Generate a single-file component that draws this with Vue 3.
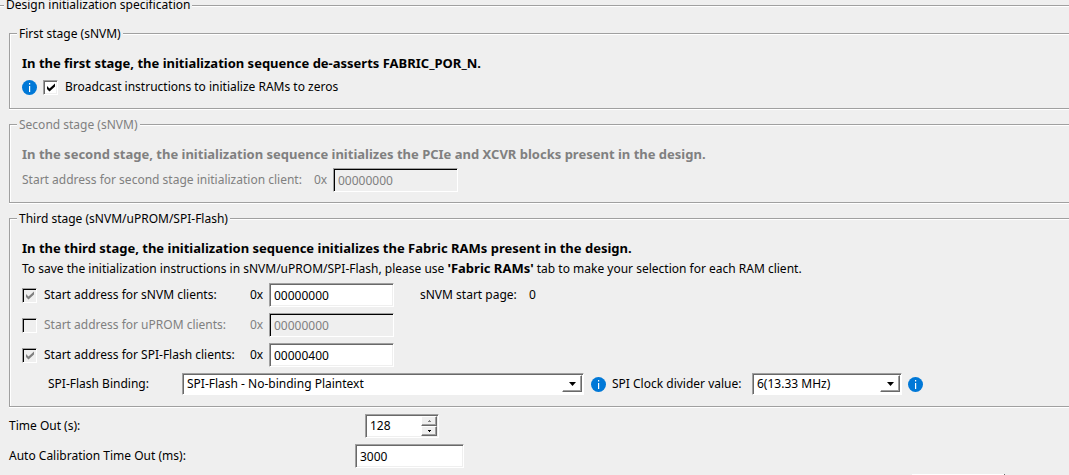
<script setup>
import { reactive, ref } from 'vue'

const broadcast = ref(true)
const secondStageAddress = ref('00000000')

const clients = reactive([
  { id: 'snvm', label: 'Start address for sNVM clients:', address: '00000000', checked: true, enabled: true, startPage: 0 },
  { id: 'uprom', label: 'Start address for uPROM clients:', address: '00000000', checked: false, enabled: false },
  { id: 'spi', label: 'Start address for SPI-Flash clients:', address: '00000400', checked: true, enabled: true },
])

const binding = ref('SPI-Flash - No-binding Plaintext')
const divider = ref('6(13.33 MHz)')
const timeOut = ref(128)
const calibrationTimeOut = ref('3000')
</script>

<template>
  <main class="page">
    <fieldset class="spec">
      <legend>Design initialization specification</legend>

      <fieldset class="stage">
        <legend>First stage (sNVM)</legend>
        <p class="lead">In the first stage, the initialization sequence de-asserts FABRIC_POR_N.</p>
        <div class="row">
          <svg class="info" viewBox="0 0 15 15" aria-hidden="true">
            <circle cx="7.5" cy="7.5" r="7.5" />
            <path d="M7 3h1.2v1.5H7zM7 6h1.2v6H7z" />
          </svg>
          <span class="check after-info">
            <input id="broadcast" v-model="broadcast" type="checkbox" />
            <svg v-if="broadcast" viewBox="0 0 15 15" aria-hidden="true"><path d="M4 6v3l2.5 2.5L12 6.5V3.5L6.5 8.5z" /></svg>
          </span>
          <label for="broadcast">Broadcast instructions to initialize RAMs to zeros</label>
        </div>
      </fieldset>

      <fieldset class="stage second" disabled>
        <legend>Second stage (sNVM)</legend>
        <p class="lead">In the second stage, the initialization sequence initializes the PCIe and XCVR blocks present in the design.</p>
        <div class="row">
          <label class="second-label" for="second-address">Start address for second stage initialization client:</label>
          <span class="prefix">0x</span>
          <input id="second-address" v-model="secondStageAddress" class="field address" type="text" />
        </div>
      </fieldset>

      <fieldset class="stage third">
        <legend>Third stage (sNVM/uPROM/SPI-Flash)</legend>
        <p class="lead">In the third stage, the initialization sequence initializes the Fabric RAMs present in the design.</p>
        <p class="hint">
          To save the initialization instructions in sNVM/uPROM/SPI-Flash, please use <b>'Fabric RAMs'</b> tab to make your selection for each RAM client.
        </p>

        <div v-for="client in clients" :key="client.id" class="row client" :class="{ off: !client.enabled }">
          <span class="check locked">
            <input :id="client.id + '-use'" type="checkbox" :checked="client.checked" disabled />
            <svg v-if="client.checked" viewBox="0 0 15 15" aria-hidden="true"><path d="M4 6v3l2.5 2.5L12 6.5V3.5L6.5 8.5z" /></svg>
          </span>
          <label class="client-label" :for="client.id + '-use'">{{ client.label }}</label>
          <label class="prefix" :for="client.id + '-address'">0x</label>
          <input
            :id="client.id + '-address'"
            v-model="client.address"
            class="field address"
            type="text"
            :disabled="!client.enabled"
          />
          <template v-if="client.startPage !== undefined">
            <span class="page-label">sNVM start page:</span>
            <span>{{ client.startPage }}</span>
          </template>
        </div>

        <div class="row binding">
          <label class="binding-label" for="binding">SPI-Flash Binding:</label>
          <span class="combo wide">
            <select id="binding" v-model="binding">
              <option>SPI-Flash - No-binding Plaintext</option>
            </select>
            <span class="drop"><svg viewBox="0 0 7 4" aria-hidden="true"><path d="M0 0h7L3.5 4z" /></svg></span>
          </span>
          <svg class="info" viewBox="0 0 15 15" aria-hidden="true">
            <circle cx="7.5" cy="7.5" r="7.5" />
            <path d="M7 3h1.2v1.5H7zM7 6h1.2v6H7z" />
          </svg>
          <label class="divider-label" for="divider">SPI Clock divider value:</label>
          <span class="combo">
            <select id="divider" v-model="divider">
              <option>6(13.33 MHz)</option>
            </select>
            <span class="drop"><svg viewBox="0 0 7 4" aria-hidden="true"><path d="M0 0h7L3.5 4z" /></svg></span>
          </span>
          <svg class="info" viewBox="0 0 15 15" aria-hidden="true">
            <circle cx="7.5" cy="7.5" r="7.5" />
            <path d="M7 3h1.2v1.5H7zM7 6h1.2v6H7z" />
          </svg>
        </div>
      </fieldset>

      <div class="row setting">
        <label class="time-label" for="time-out">Time Out (s):</label>
        <span class="field spin">
          <input id="time-out" v-model.number="timeOut" type="number" />
          <span class="steps">
            <button type="button" class="dim" @click="timeOut++"><svg viewBox="0 0 3 2" aria-hidden="true"><path d="M0 2h3V1H2V0H1v1H0z" /></svg></button>
            <button type="button" @click="timeOut--"><svg viewBox="0 0 3 2" aria-hidden="true"><path d="M0 0h3v1H2v1H1V1H0z" /></svg></button>
          </span>
        </span>
      </div>
      <div class="row setting">
        <label class="calibration-label" for="calibration">Auto Calibration Time Out (ms):</label>
        <input id="calibration" v-model="calibrationTimeOut" class="field calibration" type="text" />
      </div>
    </fieldset>
    <div class="footer"><span class="footer-edge"></span></div>
  </main>
</template>

<style>
body {
  background: #efefef;
  overflow: hidden;
}
</style>

<style scoped>
.page {
  color: #000;
  font: 12px/16px "Noto Sans", Tahoma, "DejaVu Sans", sans-serif;
  white-space: nowrap;
}
.page * {
  box-sizing: border-box;
}
fieldset {
  min-width: 0;
  margin: 0;
  padding: 0;
  border: 0 solid #a0a0a0;
}
legend {
  padding: 0 2px;
  background: #efefef;
}
p {
  margin: 0;
}
input,
select,
button {
  margin: 0;
  padding: 0;
  border: 0;
  border-radius: 0;
  outline: none;
  color: inherit;
  font: inherit;
  appearance: none;
}
.spec {
  padding: 14px 0 0 9px;
  border-top-width: 1px;
  box-shadow: inset 0 1px #fff;
}
.spec > legend {
  margin-left: -5px;
  line-height: 10px;
}
.stage {
  margin-bottom: 6px;
  padding: 11px 0 9px 12px;
  border-width: 1px 0 1px 1px;
  box-shadow: 0 1px #fff, inset 1px 1px #fff;
}
.stage > legend {
  margin-left: -5px;
  padding-top: 2px;
}
.lead,
b {
  font-size: 13px;
  font-weight: bold;
}
.lead {
  line-height: 20px;
}
b {
  line-height: 16px;
}
.row {
  display: flex;
  align-items: center;
  height: 24px;
}
.stage > .lead + .row {
  margin-top: 2px;
}
.second {
  color: #808080;
  padding-bottom: 10px;
}
.stage.second > .lead + .row {
  margin-top: 4px;
}
.second-label {
  width: 292px;
}
.prefix {
  width: 19px;
}
.field {
  height: 24px;
  padding: 0 4px;
  border: 1px solid;
  border-color: #a0a0a0 #fff #fff #a0a0a0;
  background: #fff;
  box-shadow: inset 1px 1px #696969, inset -1px -1px #efefef;
}
.field:disabled {
  color: #808080;
  background: #efefef;
  box-shadow: inset 1px 1px #000;
}
.address {
  width: 125px;
}
.info {
  flex: none;
  width: 15px;
  height: 15px;
}
.info circle {
  fill: #0078d7;
}
.info path {
  fill: #fff;
}
.check {
  display: grid;
  flex: none;
  width: 15px;
  height: 15px;
  margin-right: 7px;
}
.check > * {
  grid-area: 1 / 1;
  width: 15px;
  height: 15px;
}
.check input {
  border: 1px solid;
  border-color: #a0a0a0 #fff #fff #a0a0a0;
  background: #fff;
  box-shadow: inset 1px 1px #696969, inset -1px -1px #efefef;
}
.check svg {
  pointer-events: none;
}
.check.locked input {
  background: #efefef;
  box-shadow: inset 1px 1px #000;
}
.check.locked svg {
  fill: #808080;
}
.after-info {
  margin-left: 6px;
}
.third {
  padding-bottom: 10px;
}
.hint {
  margin-top: 1px;
  line-height: 20px;
}
.client {
  margin-top: 6px;
}
.hint + .client {
  margin-top: 4px;
}
.client-label {
  width: 206px;
}
.off {
  color: #808080;
}
.page-label {
  width: 109px;
  margin-left: 26px;
}
.binding {
  margin-top: 5px;
  padding-left: 26px;
}
.binding-label {
  width: 134px;
}
.combo {
  position: relative;
  width: 150px;
  height: 22px;
  margin-right: 6px;
  border: 1px solid;
  border-color: #a0a0a0 #fff #fff #a0a0a0;
}
.combo.wide {
  width: 402px;
  margin-right: 7px;
}
.combo select {
  display: block;
  width: 100%;
  height: 20px;
  padding: 0 24px 0 4px;
  background: #fff;
  box-shadow: inset 1px 1px #696969;
}
.drop {
  position: absolute;
  top: 1px;
  right: 1px;
  display: grid;
  place-items: center;
  width: 20px;
  height: 17px;
  border: 1px solid;
  border-color: #fff #696969 #696969 #fff;
  box-shadow: inset -1px -1px #a0a0a0;
  pointer-events: none;
}
.drop svg {
  width: 7px;
  height: 4px;
}
.divider-label {
  width: 140px;
  margin-left: 6px;
}
.third + .setting {
  margin-top: 7px;
}
.setting + .setting {
  margin-top: 6px;
}
.time-label {
  width: 356px;
}
.calibration-label {
  width: 346px;
}
.calibration {
  width: 109px;
}
.spin {
  display: flex;
  width: 74px;
  padding: 1px;
}
.spin input {
  flex: 1;
  min-width: 0;
  padding-left: 3px;
  background: transparent;
  appearance: textfield;
}
.spin input::-webkit-inner-spin-button {
  appearance: none;
  margin: 0;
}
.steps {
  display: grid;
  width: 16px;
}
.steps button {
  display: grid;
  place-items: center;
  border: 1px solid;
  border-color: #fff #696969 #696969 #fff;
  background: #efefef;
  box-shadow: inset -1px -1px #a0a0a0;
}
.steps svg {
  width: 3px;
  height: 2px;
}
.steps .dim svg {
  fill: #808080;
}
.footer {
  display: flex;
  justify-content: flex-end;
  padding: 6px 64px 0 0;
}
.footer-edge {
  width: 93px;
  height: 1px;
  border-right: 1px solid #696969;
  background: #fff;
}
</style>
